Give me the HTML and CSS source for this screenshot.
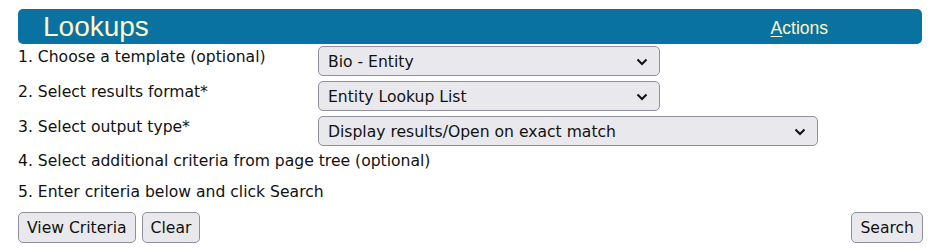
FILE: index.html
```html
<!DOCTYPE html>
<html>
<head>
<meta charset="utf-8">
<link rel="stylesheet" href="styles.css">
</head>
<body>
<div class="page">
  <div class="header">
    <span class="title">Lookups</span>
    <span class="actions"><u>A</u>ctions</span>
  </div>
  <div class="row">
    <div class="label">1. Choose a template (optional)</div>
    <div class="sel w1"><span>Bio - Entity</span><svg class="chev" width="12" height="8" viewBox="0 0 12 8"><path d="M1.5 1.5 L6 6 L10.5 1.5" fill="none" stroke="#111" stroke-width="2"/></svg></div>
  </div>
  <div class="row">
    <div class="label">2. Select results format*</div>
    <div class="sel w1"><span>Entity Lookup List</span><svg class="chev" width="12" height="8" viewBox="0 0 12 8"><path d="M1.5 1.5 L6 6 L10.5 1.5" fill="none" stroke="#111" stroke-width="2"/></svg></div>
  </div>
  <div class="row">
    <div class="label">3. Select output type*</div>
    <div class="sel w3"><span>Display results/Open on exact match</span><svg class="chev" width="12" height="8" viewBox="0 0 12 8"><path d="M1.5 1.5 L6 6 L10.5 1.5" fill="none" stroke="#111" stroke-width="2"/></svg></div>
  </div>
  <div class="line l4">4. Select additional criteria from page tree (optional)</div>
  <div class="line l5">5. Enter criteria below and click Search</div>
  <div class="buttons">
    <button class="btn">View Criteria</button>
    <button class="btn">Clear</button>
    <button class="btn search">Search</button>
  </div>
</div>
</body>
</html>
```
FILE: styles.css
```css
html, body { margin: 0; padding: 0; background: #fff; }
body { font-family: "DejaVu Sans", Verdana, sans-serif; font-size: 15.6px; color: #111; }
.page { padding: 9px 15px 0 18px; width: 904px; }
.header {
  height: 35px; background: #0a72a1; border-radius: 5px;
  display: flex; align-items: center; justify-content: space-between;
  font-family: "Liberation Sans", Arial, sans-serif; color: #fff6c6;
}
.title { font-size: 28px; padding-left: 25px; line-height: 35px; }
.actions { font-size: 17.5px; padding-right: 94px; padding-top: 3px; }
.actions u { text-decoration-thickness: 1px; text-underline-offset: 2px; }
.row { display: flex; align-items: flex-start; margin-top: 2px; }
.row + .row { margin-top: 5px; }
.label { width: 300px; padding-top: 1px; line-height: 20px; }
.sel {
  position: relative; box-sizing: border-box; height: 30px;
  background: #e9e9ed; border: 1px solid #8f8f9d; border-radius: 5px;
  display: flex; align-items: center; padding-left: 9px; padding-top: 1px;
}
.w1 { width: 342px; }
.w3 { width: 500px; }
.chev { position: absolute; right: 11px; top: 11px; }
.line { line-height: 20px; }
.l4 { margin-top: 5px; }
.l5 { margin-top: 11px; }
.buttons { display: flex; gap: 6px; margin-top: 10px; }
.btn {
  font-family: inherit; font-size: 15.6px; color: #111;
  height: 31px; box-sizing: border-box; padding: 0 8px;
  background: #e9e9ed; border: 1px solid #8f8f9d; border-radius: 5px;
}
.search { margin-left: auto; margin-right: -1px; }
```
